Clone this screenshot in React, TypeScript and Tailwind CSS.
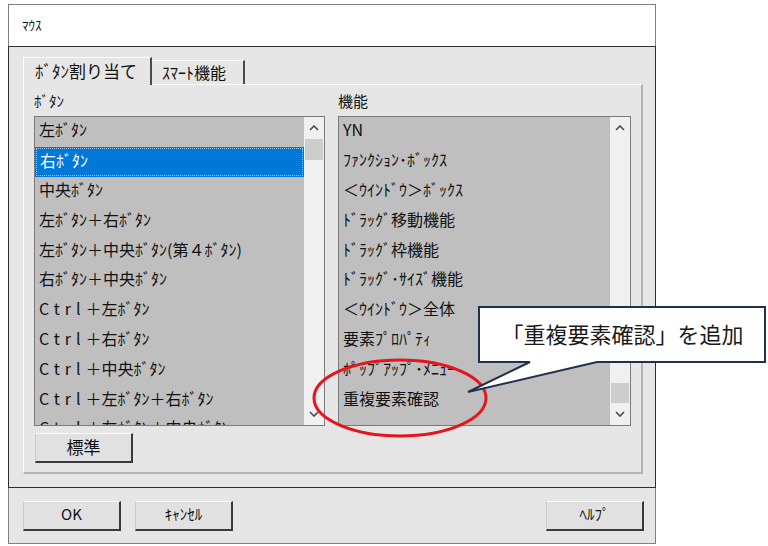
import React from 'react'

const leftItems = [
  '左ﾎﾞﾀﾝ',
  '右ﾎﾞﾀﾝ',
  '中央ﾎﾞﾀﾝ',
  '左ﾎﾞﾀﾝ＋右ﾎﾞﾀﾝ',
  '左ﾎﾞﾀﾝ＋中央ﾎﾞﾀﾝ(第４ﾎﾞﾀﾝ)',
  '右ﾎﾞﾀﾝ＋中央ﾎﾞﾀﾝ',
  'Ctrl＋左ﾎﾞﾀﾝ',
  'Ctrl＋右ﾎﾞﾀﾝ',
  'Ctrl＋中央ﾎﾞﾀﾝ',
  'Ctrl＋左ﾎﾞﾀﾝ＋右ﾎﾞﾀﾝ',
  'Ctrl＋左ﾎﾞﾀﾝ＋中央ﾎﾞﾀﾝ',
]

const rightItems = [
  'YN',
  'ﾌｧﾝｸｼｮﾝ･ﾎﾞｯｸｽ',
  '＜ｳｲﾝﾄﾞｳ＞ﾎﾞｯｸｽ',
  'ﾄﾞﾗｯｸﾞ移動機能',
  'ﾄﾞﾗｯｸﾞ枠機能',
  'ﾄﾞﾗｯｸﾞ･ｻｲｽﾞ機能',
  '＜ｳｲﾝﾄﾞｳ＞全体',
  '要素ﾌﾟﾛﾊﾟﾃｨ',
  'ﾎﾟｯﾌﾟｱｯﾌﾟ･ﾒﾆｭｰ',
  '重複要素確認',
]

function ItemText({ text }: { text: string }) {
  // Ctrl は字間が広く見える
  if (text.startsWith('Ctrl')) {
    return (
      <>
        <span className="tracking-[5px]">Ctrl</span>
        {text.slice(4)}
      </>
    )
  }
  return <>{text}</>
}

function Chevron({ up }: { up?: boolean }) {
  return (
    <svg width="10" height="6" viewBox="0 0 10 6">
      <polyline
        points={up ? '1,5 5,1 9,5' : '1,1 5,5 9,1'}
        fill="none"
        stroke="#4a4a4a"
        strokeWidth="1.6"
      />
    </svg>
  )
}

function ListBox({
  items,
  selected,
  thumbTop,
  width,
}: {
  items: string[]
  selected?: number
  thumbTop: boolean
  width: string
}) {
  return (
    <div className={`${width} h-[310px] flex border border-[#7a7a7a] bg-[#bfbfbf]`}>
      <div className="flex-1 overflow-hidden">
        {items.map((t, i) =>
          i === selected ? (
            <div key={i} className="h-[29.8px] bg-[#0078d7] p-[1px]">
              <div className="h-full flex items-center pl-[3px] pb-[4px] border border-dotted border-[#9ecbf0] text-white text-[16px] leading-none">
                <ItemText text={t} />
              </div>
            </div>
          ) : (
            <div key={i} className="h-[29.8px] flex items-center pl-[4px] pb-[5px] text-[16px] leading-none text-[#111] whitespace-nowrap">
              <ItemText text={t} />
            </div>
          )
        )}
      </div>
      <div className="w-[20px] bg-[#f0f0f0] flex flex-col">
        <div className="h-[22px] flex items-center justify-center">
          <Chevron up />
        </div>
        {thumbTop && <div className="h-[21px] mx-[1px] bg-[#cdcdcd]" />}
        <div className="flex-1" />
        {!thumbTop && <div className="h-[20px] mx-[1px] bg-[#cdcdcd]" />}
        <div className="h-[22px] flex items-center justify-center">
          <Chevron />
        </div>
      </div>
    </div>
  )
}

function WinButton({ label, className }: { label: string; className?: string }) {
  return (
    <div
      className={`h-[30px] w-[98px] flex items-center justify-center pb-[2px] bg-[#e1e1e1] border-t border-l border-t-[#fbfbfb] border-l-[#c9c9c9] border-b-2 border-r-2 border-b-[#3a3a3a] border-r-[#3a3a3a] text-[15px] text-[#111] ${className ?? ''}`}
    >
      {label}
    </div>
  )
}

export default function App() {
  return (
    <div className="relative w-[768px] h-[546px] bg-white pl-[8px] pt-[4px] font-['Noto_Sans_CJK_JP',sans-serif] overflow-hidden">
      <div className="w-[648px] h-[540px] flex flex-col">
        {/* タイトルバー */}
        <div className="h-[42px] bg-white border-t border-x border-[#7f7f7f] flex items-center pl-[13px] pb-[2px] text-[13px] text-[#111]">
          ﾏｳｽ
        </div>

        {/* タブ領域 */}
        <div className="h-[442px] bg-[#e6e6e6] border border-[#2f2f2f] pt-[10px] pl-[14px]">
          <div className="flex items-end h-[27px]">
            <div className="relative z-10 w-[129px] h-[28px] -mb-px bg-[#e6e6e6] border-t border-l border-[#fcfcfc] border-r-2 border-r-[#4a4a4a] flex items-center pl-[11px] pb-[2px] text-[17px] text-[#111]">
              ﾎﾞﾀﾝ割り当て
            </div>
            <div className="w-[93px] h-[24px] bg-[#e6e6e6] border-t border-[#fcfcfc] border-r-2 border-r-[#4a4a4a] flex items-center pl-[10px] pb-[1px] text-[16px] text-[#111]">
              ｽﾏｰﾄ機能
            </div>
          </div>
          <div className="w-[620px] h-[390px] border-t border-l border-[#fcfcfc] border-b-2 border-r-2 border-b-[#b4b4b4] border-r-[#b4b4b4] pt-[5px] pl-[10px]">
            <div className="flex gap-[13px]">
              <div className="flex flex-col">
                <div className="h-[26px] flex items-center pb-[4px] text-[15px] text-[#111]">ﾎﾞﾀﾝ</div>
                <ListBox items={leftItems} selected={1} thumbTop width="w-[291px]" />
                <WinButton label="標準" className="mt-[7px] ml-[1px] text-[17px]" />
              </div>
              <div className="flex flex-col">
                <div className="h-[26px] flex items-center pb-[4px] text-[15px] text-[#111]">機能</div>
                <ListBox items={rightItems} thumbTop={false} width="w-[293px]" />
              </div>
            </div>
          </div>
        </div>

        {/* 下部ボタン */}
        <div className="flex-1 bg-[#e6e6e6] border-x border-b border-[#7f7f7f] flex items-start pt-[13px] pl-[14px] pr-[11px]">
          <WinButton label="OK" className="h-[29px]" />
          <WinButton label="ｷｬﾝｾﾙ" className="h-[29px] ml-[14px]" />
          <WinButton label="ﾍﾙﾌﾟ" className="h-[29px] ml-auto" />
        </div>
      </div>

      {/* 注釈 */}
      <svg className="absolute left-0 top-0 pointer-events-none" width="768" height="546" viewBox="0 0 768 546">
        <ellipse cx="400" cy="398" rx="86" ry="38" fill="none" stroke="#e8141c" strokeWidth="3" />
        <path
          d="M479,307 H765 V362 H597 L468,392 L530,362 H479 Z"
          fill="#ffffff"
          stroke="#22304f"
          strokeWidth="2"
          strokeLinejoin="miter"
        />
      </svg>
      <div className="absolute left-[479px] top-[307px] w-[287px] h-[55px] flex items-center justify-center pb-[2px] text-[22px] text-[#1a1a1a]">
        「重複要素確認」を追加
      </div>
    </div>
  )
}
